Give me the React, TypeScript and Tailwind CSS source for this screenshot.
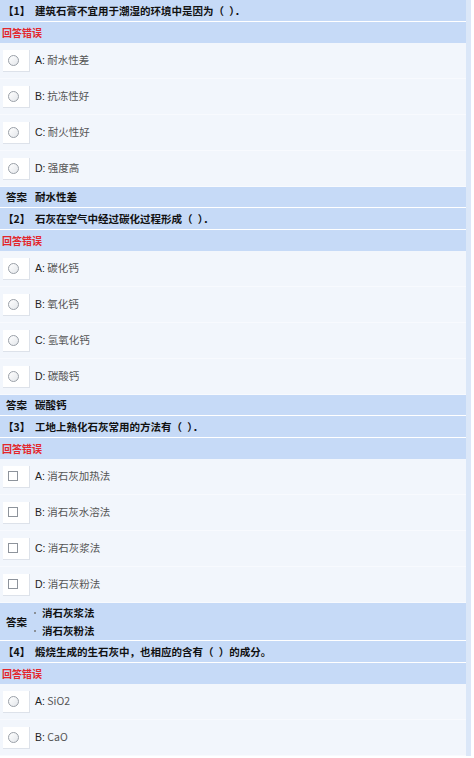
const font = { fontFamily: '"Noto Sans CJK SC", "Liberation Sans", sans-serif' };

type Q = {
  no: number;
  title: string;
  multi?: boolean;
  options: string[];
  answer: string[];
};

const QUESTIONS: Q[] = [
  {
    no: 1,
    title: "建筑石膏不宜用于潮湿的环境中是因为（\u2002）．",
    options: ["A: 耐水性差", "B: 抗冻性好", "C: 耐火性好", "D: 强度高"],
    answer: ["耐水性差"],
  },
  {
    no: 2,
    title: "石灰在空气中经过碳化过程形成（\u2002）．",
    options: ["A: 碳化钙", "B: 氧化钙", "C: 氢氧化钙", "D: 碳酸钙"],
    answer: ["碳酸钙"],
  },
  {
    no: 3,
    title: "工地上熟化石灰常用的方法有（\u2002）．",
    multi: true,
    options: ["A: 消石灰加热法", "B: 消石灰水溶法", "C: 消石灰浆法", "D: 消石灰粉法"],
    answer: ["消石灰浆法", "消石灰粉法"],
  },
  {
    no: 4,
    title: "煅烧生成的生石灰中，也相应的含有（\u2002）的成分。",
    options: ["A: SiO2", "B: CaO"],
    answer: [],
  },
];

const Radio = () => (
  <span className="block w-[11px] h-[11px] rounded-full border border-[#9aa0a8] bg-gradient-to-br from-white to-[#e4e7eb]" />
);

const Check = () => (
  <span className="block w-[10px] h-[10px] border border-[#8e949c] bg-white" />
);

const OptionRow = ({ text, multi }: { text: string; multi?: boolean }) => {
  const [label, ...rest] = text.split(" ");
  return (
    <div className="flex h-9 items-center bg-[#f2f6fc] border-b border-[#f8fafe]">
      <div className="w-[32px] h-full flex items-center pl-[3px]">
        <div className="w-[27px] h-[22px] bg-white border-r border-b border-[#dde2ea] flex items-center pl-[5px]">
          {multi ? <Check /> : <Radio />}
        </div>
      </div>
      <div className="pl-[3px] text-[10.5px] text-[#555]">
        <span className="text-[#222]" style={{ fontFamily: '"Liberation Sans", sans-serif' }}>
          {label}
        </span>{" "}
        {rest.join(" ")}
      </div>
    </div>
  );
};

const Section = ({ q }: { q: Q }) => (
  <div>
    <div className="flex h-[22px] items-center bg-[#c6daf7] font-bold text-[10.5px] text-[#111] border-b border-white">
      <div className="w-[32px] pl-[3px]">【{q.no}】</div>
      <div className="pl-[3px]">{q.title}</div>
    </div>
    <div className="flex h-[21px] items-center bg-[#c6daf7] pl-[2px] font-bold text-[10px] text-[#e3262b]">
      回答错误
    </div>
    {q.options.map((o) => (
      <OptionRow key={o} text={o} multi={q.multi} />
    ))}
    {q.answer.length > 0 && (
      <div
        className={`flex items-center bg-[#c6daf7] font-bold text-[10.5px] text-[#111] border-b border-white ${
          q.answer.length > 1 ? "h-[38px]" : "h-[21px]"
        }`}
      >
        <div className="w-[32px] pl-[6px]">答案</div>
        {q.answer.length > 1 ? (
          <div className="flex flex-col">
            {q.answer.map((a) => (
              <div key={a} className="flex items-center h-[18px] leading-[18px]">
                <span className="w-[2px] h-[2px] mr-[6px] ml-[2px] bg-[#777] rounded-full" />
                <span>{a}</span>
              </div>
            ))}
          </div>
        ) : (
          <div className="pl-[3px]">{q.answer[0]}</div>
        )}
      </div>
    )}
  </div>
);

export default function App() {
  return (
    <div className="w-[474px] h-[758px] overflow-hidden bg-white" style={font}>
      <div className="w-[471px] border-r-[5px] border-[#dbe7f8]">
        {QUESTIONS.map((q) => (
          <Section key={q.no} q={q} />
        ))}
      </div>
    </div>
  );
}
